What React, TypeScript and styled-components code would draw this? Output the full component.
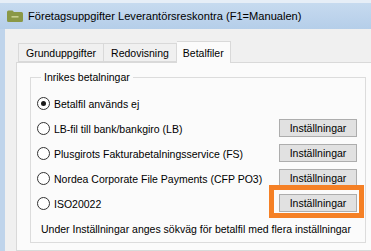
import styled, { createGlobalStyle } from 'styled-components';

const GlobalStyle = createGlobalStyle`
    html, body {
        margin: 0;
        padding: 0;
        width: 371px;
        height: 251px;
        overflow: hidden;
        background: #f0f0f0;
        font-family: "Liberation Sans", Arial, sans-serif;
        color: #000;
    }
`

const Window = styled.div`
    width: 371px;
    height: 251px;
    display: flex;
    flex-direction: column;
    overflow: hidden;
`

const TitleBar = styled.div`
    height: 26px;
    flex-shrink: 0;
    border-top: 3px solid #e6eef7;
    background: linear-gradient(#c6daef, #b5cee9);
    display: flex;
    align-items: center;
    gap: 5px;
    padding-left: 7px;
    font-size: 11.1px;
    white-space: nowrap;
`

const Body = styled.div`
    flex: 1;
    border-left: 5px solid #bfd4eb;
    padding: 12px 0 0 11px;
    display: flex;
    flex-direction: column;
`

const TabStrip = styled.div`
    display: flex;
    align-items: flex-end;
    height: 21px;
    padding-left: 2px;
    position: relative;
    z-index: 1;
`

const Tab = styled.div<{ $active?: boolean }>`
    height: ${p => (p.$active ? '22px' : '19px')};
    margin-bottom: ${p => (p.$active ? '-1px' : '0')};
    padding: 0 ${p => (p.$active ? '6px' : '7px')};
    box-sizing: border-box;
    display: flex;
    align-items: center;
    font-size: 10.5px;
    background: ${p => (p.$active ? '#fbfbfb' : '#f0f0f0')};
    border: 1px solid #d9d9d9;
    border-bottom: ${p => (p.$active ? 'none' : '1px solid #d9d9d9')};
    & + & {
        border-left: none;
    }
`

const Panel = styled.div`
    flex: 1;
    width: 365px;
    background: #fbfbfb;
    border: 1px solid #d9d9d9;
    padding: 8px 0 0 13px;
`

const Group = styled.fieldset`
    width: 336px;
    min-width: 0;
    box-sizing: border-box;
    margin: 0;
    border: 1px solid #dcdcdc;
    padding: 8px 8px 7px 6px;
    font-size: 10.5px;

    legend {
        margin-left: 4px;
        padding: 0 3px;
        line-height: 12px;
    }
`

const Row = styled.div`
    height: 25px;
    display: flex;
    align-items: center;
    gap: 4px;
`

const Radio = styled.span<{ $checked?: boolean }>`
    width: 13px;
    height: 13px;
    box-sizing: border-box;
    border-radius: 50%;
    border: 1px solid #333;
    background: #fff;
    display: flex;
    align-items: center;
    justify-content: center;
    flex-shrink: 0;

    &::after {
        content: '';
        width: 5px;
        height: 5px;
        border-radius: 50%;
        background: ${p => (p.$checked ? '#1a1a1a' : 'transparent')};
    }
`

const Label = styled.span`
    flex: 1;
    white-space: nowrap;
    line-height: 12px;
`

const ButtonSlot = styled.span`
    position: relative;
    display: flex;
`

const Button = styled.button`
    width: 78px;
    height: 18px;
    padding: 0;
    margin-top: -2px;
    background: #e1e1e1;
    border: 1px solid #adadad;
    font: inherit;
    font-size: 10.5px;
    color: #000;
`

const Highlight = styled.span`
    position: absolute;
    left: -10px;
    right: -7px;
    top: -11px;
    bottom: -6px;
    border: 5px solid #f58025;
    pointer-events: none;
`

const Note = styled.div`
    margin: 7px 0 0 4px;
    line-height: 12px;
    white-space: nowrap;
`

const FolderIcon = () => (
    <svg width="16" height="12" viewBox="0 0 16 12">
        <path d="M0 2 Q0 0.5 1.5 0.5 H5.5 L7 2 H14.5 Q16 2 16 3.5 V10.5 Q16 12 14.5 12 H1.5 Q0 12 0 10.5 Z" fill="#8a9846" />
        <rect x="4.5" y="6" width="7" height="1.6" fill="#c9d08f" />
    </svg>
)

const options = [
    { label: 'Betalfil används ej', checked: true, button: false },
    { label: 'LB-fil till bank/bankgiro (LB)', button: true },
    { label: 'Plusgirots Fakturabetalningsservice (FS)', button: true },
    { label: 'Nordea Corporate File Payments (CFP PO3)', button: true },
    { label: 'ISO20022', button: true, marked: true },
]

export default function App() {
    return <>
        <GlobalStyle />
        <Window>
            <TitleBar>
                <FolderIcon />
                <span>Företagsuppgifter Leverantörsreskontra (F1=Manualen)</span>
            </TitleBar>
            <Body>
                <TabStrip>
                    <Tab>Grunduppgifter</Tab>
                    <Tab>Redovisning</Tab>
                    <Tab $active>Betalfiler</Tab>
                </TabStrip>
                <Panel>
                    <Group>
                        <legend>Inrikes betalningar</legend>
                        {options.map(o => (
                            <Row key={o.label}>
                                <Radio $checked={o.checked} />
                                <Label>{o.label}</Label>
                                {o.button && (
                                    <ButtonSlot>
                                        <Button>Inställningar</Button>
                                        {o.marked && <Highlight />}
                                    </ButtonSlot>
                                )}
                            </Row>
                        ))}
                        <Note>Under Inställningar anges sökväg för betalfil med flera inställningar</Note>
                    </Group>
                </Panel>
            </Body>
        </Window>
    </>
}
